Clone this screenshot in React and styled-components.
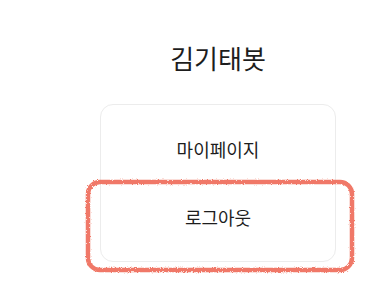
import React from "react";
import styled, { createGlobalStyle } from "styled-components";

const GlobalStyle = createGlobalStyle`
  html, body {
    margin: 0;
    padding: 0;
    background: #fff;
  }
  body {
    font-family: "Noto Sans CJK KR", "Noto Sans", sans-serif;
    color: #1d1d1d;
  }
`;

const Page = styled.div`
  position: relative;
  width: 382px;
  height: 296px;
  box-sizing: border-box;
  padding: 34px 0 0 100px;
`;

const Panel = styled.div`
  width: 236px;
  display: flex;
  flex-direction: column;
  align-items: center;
`;

const Title = styled.h1`
  margin: 0 0 22px;
  font-size: 26px;
  font-weight: 400;
  line-height: 48px;
`;

const Menu = styled.div`
  width: 100%;
  box-sizing: border-box;
  border: 1px solid #ececec;
  border-radius: 13px;
  padding: 10px 0;
  display: flex;
  flex-direction: column;
`;

const MenuItem = styled.button`
  height: 68px;
  border: 0;
  background: transparent;
  font-family: inherit;
  font-size: 18px;
  color: #1d1d1d;
  cursor: pointer;
  padding: 0;
`;

const Scribble = styled.svg`
  position: absolute;
  left: 0;
  top: 0;
  pointer-events: none;
`;

export default function App() {
  return (
    <>
      <GlobalStyle />
      <Page>
        <Panel>
          <Title>김기태봇</Title>
          <Menu>
            <MenuItem>마이페이지</MenuItem>
            <MenuItem>로그아웃</MenuItem>
          </Menu>
        </Panel>
        <Scribble width="382" height="296" viewBox="0 0 382 296">
          <defs>
            <filter id="rough" x="-5%" y="-5%" width="110%" height="110%">
              <feTurbulence type="fractalNoise" baseFrequency="1.2" numOctaves="2" seed="3" />
              <feDisplacementMap in="SourceGraphic" scale="3" />
            </filter>
          </defs>
          <rect
            x="88"
            y="182"
            width="264"
            height="88"
            rx="12"
            fill="none"
            stroke="#ee6a56"
            strokeOpacity="0.9"
            strokeWidth="4.5"
            filter="url(#rough)"
          />
        </Scribble>
      </Page>
    </>
  );
}
